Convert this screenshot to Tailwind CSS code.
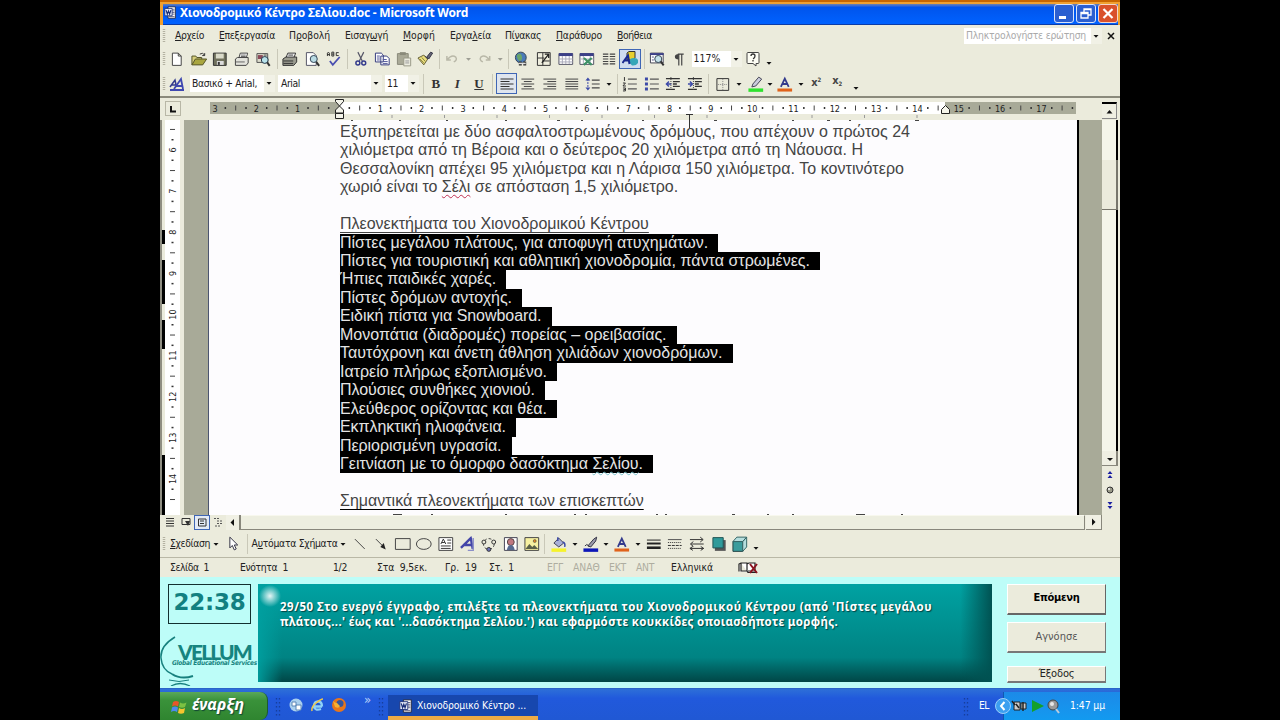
<!DOCTYPE html>
<html lang="el">
<head>
    <meta charset="UTF-8">
    <meta name="viewport" content="width=device-width, initial-scale=1.0">
    <title>Χιονοδρομικό Κέντρο Σελίου.doc - Microsoft Word</title>
    <script src="https://cdn.jsdelivr.net/npm/@tailwindcss/browser@4"></script>
</head>
<body class="bg-black overflow-hidden">
    <!-- Shared glyphs -->
    <svg class="hidden">
        <symbol id="down" viewBox="0 0 10 16"><path d="M2.5 7h5L5 9.8z" fill="#111"/></symbol>
        <symbol id="low" viewBox="0 0 10 16"><path d="M2.5 11h5L5 13.8z" fill="#111"/></symbol>
        <symbol id="grip" viewBox="0 0 4 16"><path d="M2 1v14" stroke="#b4b2a2" stroke-width="2.5" stroke-dasharray="1 1"/></symbol>
        <symbol id="word" viewBox="0 0 16 16"><path d="M5 1h9v14H5z" fill="#fff" stroke="#223"/><path d="M8 4h5M8 6h5M10 8h3M10 10h3M6 13h7" stroke="#557"/><path d="M1 3h9v9H1z" fill="#e8ecf8" stroke="#1b2f78"/><path d="M2.5 5l1.6 5L5.5 6l1.4 4 1.6-5" fill="none" stroke="#1b2f78" stroke-width="1.4"/></symbol>
        <symbol id="fontA" viewBox="0 0 16 16"><path d="M4 11L8 2.500l4 8.500M5.500 8h5" fill="none" stroke="#333a8c" stroke-width="1.800"/><path d="M0.500 12.500h15v3.500h-15z" fill="#e0621a"/></symbol>
        <symbol id="wordart" viewBox="0 0 16 16"><path d="M1 12L11 2l2 11M4.500 9h8" fill="none" stroke="#4446a8" stroke-width="2.400"/><path d="M13.500 2v12.500H8" fill="none" stroke="#8b8fc8" stroke-width="1.500"/></symbol>
    </svg>

    <div class="w-[960px] h-[720px] mx-auto bg-[#ebebdc] flex flex-col overflow-hidden font-['DejaVu_Sans_Condensed','DejaVu_Sans',sans-serif] text-[10.300px] text-[#222] whitespace-nowrap">

        <!-- Title bar -->
        <div class="h-[25px] shrink-0 border-t-2 border-[#c96600] bg-[#f0a030] pt-[2px] pr-[2px] pl-[3px]">
            <div class="h-[21px] flex items-center bg-linear-to-b from-[#6a7fae] via-[#0054ec] via-15% to-[#0062ff] border-b border-[#0b3ca8] pl-[1px]">
                <svg class="size-[13px] -mt-1"><use href="#word"/></svg>
                <span class="fit ml-[3px] -mt-[2px] text-white font-bold text-[12px] font-['Noto_Sans',sans-serif]" data-w="288">Χιονοδρομικό Κέντρο Σελίου.doc - Microsoft Word</span>
                <div class="ml-auto flex gap-[2px] -mt-[1px]">
                    <svg class="w-5 h-[19px]" viewBox="0 0 20 19"><rect x=".5" y=".5" width="19" height="18" rx="2.500" fill="#2b5fd0" stroke="#d9e4fa"/><path d="M5 13.500h7" stroke="#fff" stroke-width="3"/></svg>
                    <svg class="w-5 h-[19px]" viewBox="0 0 20 19"><rect x=".5" y=".5" width="19" height="18" rx="2.500" fill="#2b5fd0" stroke="#d9e4fa"/><path d="M8 8V5h7v6h-3M5 8.500h7V14H5zM5 9.500h7M8 5.500h7" stroke="#fff" fill="none" stroke-width="1.300"/></svg>
                    <svg class="w-5 h-[19px]" viewBox="0 0 20 19"><rect x=".5" y=".5" width="19" height="18" rx="2.500" fill="#d9512c" stroke="#f4d6c8"/><path d="M5.500 5l9 9M14.500 5l-9 9" stroke="#fff" stroke-width="2.200"/></svg>
                </div>
            </div>
        </div>

        <!-- Menu bar -->
        <div class="h-[22px] shrink-0 flex items-center pl-[2px]">
            <svg class="w-1 h-4 mr-[9px]"><use href="#grip"/></svg>
            <div class="w-[44px]"><span class="fit" data-w="29"><u>Α</u>ρχείο</span></div>
            <div class="w-[70px]"><span class="fit" data-w="56"><u>Ε</u>πεξεργασία</span></div>
            <div class="w-[56px]"><span class="fit" data-w="41">Π<u>ρ</u>οβολή</span></div>
            <div class="w-[58px]"><span class="fit" data-w="43">Εισαγ<u>ω</u>γή</span></div>
            <div class="w-[47px]"><span class="fit" data-w="32"><u>Μ</u>ορφή</span></div>
            <div class="w-[55px]"><span class="fit" data-w="41">Εργα<u>λ</u>εία</span></div>
            <div class="w-[51px]"><span class="fit" data-w="36">Πί<u>ν</u>ακας</span></div>
            <div class="w-[61px]"><span class="fit" data-w="46"><u>Π</u>αράθυρο</span></div>
            <div><span class="fit" data-w="35"><u>Β</u>οήθεια</span></div>
            <div class="ml-auto w-[138px] h-4 bg-white text-[#aaa] flex items-center pl-[2px]">
                <span class="fit" data-w="120">Πληκτρολογήστε ερώτηση</span>
                <div class="ml-auto w-[11px] h-4 bg-[#f1f1e6]"><svg class="w-[10px] h-4"><use href="#down"/></svg></div>
            </div>
            <svg class="size-2 ml-[5px] mr-[5px]" viewBox="0 0 8 8"><path d="M1 1l6 6M7 1L1 7" stroke="#111" stroke-width="1.500"/></svg>
        </div>

        <!-- Standard toolbar -->
        <div class="h-6 shrink-0 flex items-center pl-[2px]">
            <svg class="w-1 h-4"><use href="#grip"/></svg>
            <div class="flex items-center *:w-[21.600px] *:h-4">
                <svg viewBox="-3 0 22 16"><path d="M3.500 2h6l3 3v9.500h-9zM9.500 2v3h3" fill="#fff" stroke="#444"/></svg>
                <svg viewBox="-3 0 22 16"><path d="M1 14V5h4l1 1.500h5V8" fill="#d6cf7c" stroke="#55542a"/><path d="M1 14l3.500-6H16l-4 6z" fill="#a9a63f" stroke="#55542a"/><path d="M9 3q3-2 5 1M14 2v2.500h-2.500" fill="none" stroke="#333"/></svg>
                <svg viewBox="-3 0 22 16"><path d="M1.500 2h13v12.500h-13z" fill="#6f705c" stroke="#333"/><path d="M4 2.500h8v5H4z" fill="#d9dac9"/><path d="M5 10h7v4H5z" fill="#ddd"/><path d="M6 11h2v3H6z" fill="#333"/></svg>
                <svg viewBox="-3 0 22 16"><path d="M5 7l1.500-5H14l-1.500 5" fill="#fff" stroke="#444"/><path d="M1.500 8l2-1.500h11V12l-2 2.500h-11z" fill="#e3e3dc" stroke="#444"/><path d="M2 11h9M7 4h5M7 5.500h5" stroke="#666"/></svg>
                <svg viewBox="-3 0 22 16"><path d="M2 2.500h11v9H2z" fill="#dcdccc" stroke="#555"/><path d="M3 4h5v4H3z" fill="#8b4a5a"/><path d="M9 4h3" stroke="#555"/><circle cx="10" cy="9" r="3.500" fill="#b8e2ea" stroke="#234"/><path d="M12.500 11.500L15 15" stroke="#333" stroke-width="2"/></svg>
            </div>
            <div class="w-[5.400px] h-5 border-l border-[#c9c8b8] translate-x-[3px]"></div>
            <div class="flex items-center *:w-[21.600px] *:h-4">
                <svg viewBox="-3 0 22 16"><path d="M4 7l2-5h8l-2 5" fill="#fff" stroke="#333"/><path d="M1 8l3-2h11v5l-3 3.500H1z" fill="#9b9c90" stroke="#333"/><path d="M1.500 10h10M1.500 12.500h10M6.500 4h5" stroke="#333"/></svg>
                <svg viewBox="-3 0 22 16"><path d="M2.500 1.500h7l3 3v10h-10z" fill="#fff" stroke="#556"/><circle cx="10" cy="8" r="3.600" fill="#b9dbe4" stroke="#345"/><path d="M12.500 11L15.500 15" stroke="#333" stroke-width="2"/></svg>
                <svg viewBox="-3 0 22 16"><path d="M1.500 5V2l1-1 1 1v3M1.500 3.500h2M6 5V1h2v4zM6 3h2M13 1.500h-2.500v3H13" fill="none" stroke="#222" stroke-width=".9"/><path d="M4 10l3 4 7-8" fill="none" stroke="#4a4fb0" stroke-width="1.800"/></svg>
            </div>
            <div class="w-[5.400px] h-5 border-l border-[#c9c8b8] translate-x-[3px]"></div>
            <div class="flex items-center *:w-[21.600px] *:h-4">
                <svg viewBox="-3 0 22 16"><path d="M5 1l4.500 9M11 1l-4.500 9" stroke="#556" stroke-width="1.200"/><circle cx="5" cy="12" r="2" fill="none" stroke="#333a8c" stroke-width="1.500"/><circle cx="11" cy="12" r="2" fill="none" stroke="#333a8c" stroke-width="1.500"/></svg>
                <svg viewBox="-3 0 22 16"><path d="M1.500 2h6l2 2v7h-8zM7 5h6l2.500 2.500V14H7z" fill="#fff" stroke="#333a7c"/><path d="M3 5h3M3 7h3M3 9h3M9 8.500h4M9 10.500h5M9 12.500h5" stroke="#555a9c"/></svg>
                <svg viewBox="-3 0 22 16"><path d="M1.500 2.500h11v11h-11z" fill="#a9a997" stroke="#8a8a7a"/><path d="M4 1h6v3H4z" fill="#8a8a7a"/><path d="M8 7h7v8H8z" fill="#ecece0" stroke="#999988"/><path d="M9.500 10h4M9.500 12h4" stroke="#999"/></svg>
                <svg viewBox="-3 0 22 16"><path d="M1 7l6-3 4 4-4 6z" fill="#eadf7d" stroke="#66603a"/><path d="M8 5l3 3M10 6l4-5 2 1-4 6z" fill="#667" stroke="#334"/><path d="M3 8l4 4M5 6.500l3.500 4" stroke="#8a8240"/></svg>
            </div>
            <div class="w-[5.400px] h-5 border-l border-[#c9c8b8] translate-x-[3px]"></div>
            <svg class="w-[21.600px] h-4" viewBox="-3 0 22 16"><path d="M3 5v4h4M3.500 8.500Q8 3 12 6q2 3-2 5" fill="none" stroke="#b9b8a8" stroke-width="1.500"/></svg>
            <svg class="w-[11px] h-4 opacity-35"><use href="#down"/></svg>
            <svg class="w-[21.600px] h-4" viewBox="-3 0 22 16"><path d="M13 5v4H9M12.500 8.500Q8 3 4 6q-2 3 2 5" fill="none" stroke="#b9b8a8" stroke-width="1.500"/></svg>
            <svg class="w-[10.500px] h-4 opacity-35"><use href="#down"/></svg>
            <div class="w-[5.400px] h-5 border-l border-[#c9c8b8] translate-x-[2px]"></div>
            <div class="flex items-center *:w-[21.600px] *:h-4">
                <svg viewBox="-3 0 22 16"><circle cx="7" cy="6.500" r="5.500" fill="#4b7ab8" stroke="#345"/><path d="M3 4q4-3 5 1t-2 5q-3-1-3-6z" fill="#6aa56a"/><path d="M5 12.500h3m1.500 0h3" stroke="#333" stroke-width="4"/><path d="M5 12.500h7" stroke="#ddd" stroke-width="1.500"/></svg>
                <svg viewBox="-3 0 22 16"><path d="M1.500 1.500h13v13h-13zM1.500 7h7M7 1.500v13M7 10h7" fill="#efeede" stroke="#333"/><path d="M6 12l7-9M9 3h4v4" fill="none" stroke="#222" stroke-width="1.300"/></svg>
                <svg viewBox="-3 0 22 16"><path d="M1 2.500h14v11H1z" fill="#fff" stroke="#556"/><path d="M1 2h14v3H1z" fill="#3c4088"/><path d="M4.500 5v8M8 5v8M11.500 5v8M1 8h14M1 11h14" stroke="#aab"/></svg>
                <svg viewBox="-3 0 22 16"><path d="M1 2.500h14v11H1z" fill="#fff" stroke="#556"/><path d="M1 2h14v3H1z" fill="#3c4088"/><path d="M4.500 5v8M11.500 5v8M1 8h14" stroke="#aab"/><path d="M5 7l8 7M13 7l-8 7" stroke="#3f9168" stroke-width="2.200"/></svg>
                <svg viewBox="-3 0 22 16"><path d="M2 3h5.500M2 5.500h5.500M2 8h5.500M2 10.500h5.500M2 13h5.500M9 3h5.500M9 5.500h5.500M9 8h5.500M9 10.500h5.500M9 13h5.500" stroke="#444" stroke-width="1.100"/></svg>
                <div class="!h-5 border border-[#3f66b5] bg-[#cfdcf0] flex items-center justify-center"><svg class="size-4" viewBox="0 0 16 16"><path d="M5 2l2-1.500h6V7L11 9H5z" fill="#e7cf2f" stroke="#333"/><path d="M7 11q0-4 5-4t4 5q-2 3-6 2.500z" fill="#36a6b8"/><path d="M.5 12L6 4.500l1.500 8.500M2 9.500h5" fill="none" stroke="#1b2a90" stroke-width="2"/></svg></div>
            </div>
            <div class="w-[5.400px] h-5 border-l border-[#c9c8b8] translate-x-[3px]"></div>
            <div class="flex items-center *:w-[21.600px] *:h-4">
                <svg viewBox="-3 0 22 16"><path d="M1.500 2h13v10h-13z" fill="#fff" stroke="#445"/><path d="M1 2h14v2H1z" fill="#3c4088"/><path d="M3 6h2M3 9h2" stroke="#558"/><circle cx="9.500" cy="8" r="3.600" fill="#c5e2ea" stroke="#345"/><path d="M12 10.500l3 4" stroke="#333" stroke-width="2"/></svg>
                <svg viewBox="-3 0 22 16"><path d="M8 3v11.500M11 3v11.500M7 3h6" stroke="#444" stroke-width="1.200"/><path d="M8 3Q4 3 4 5.800T8 8.500z" fill="#444"/></svg>
            </div>
            <div class="ml-[2px] w-[50px] h-4 bg-white flex items-center pl-[2px]">
                <span class="fit" data-w="27">117%</span>
                <div class="ml-auto w-[11px] h-4 bg-[#f1f1e6]"><svg class="w-[10px] h-4"><use href="#down"/></svg></div>
            </div>
            <svg class="w-[22px] h-4" viewBox="-3 0 22 16"><path d="M3 1.500h10q1 0 1 1v9q0 1-1 1h-2V15l-3-2.500H3q-1 0-1-1v-9q0-1 1-1z" fill="#fdfdf4" stroke="#444"/><path d="M6 5q0-2 2-2t2 2-2 2.800M8 9v1.500" fill="none" stroke="#333" stroke-width="1.300"/></svg>
            <svg class="w-[10px] h-4"><use href="#low"/></svg>
        </div>

        <!-- Formatting toolbar -->
        <div class="h-[25px] shrink-0 flex items-center pl-[2px]">
            <svg class="w-1 h-4"><use href="#grip"/></svg>
            <svg class="w-[22px] h-4" viewBox="-3 0 22 16"><path d="M1 11L6 4l1.500 7M3 9h4" fill="none" stroke="#333a8c" stroke-width="1.500"/><path d="M5 13l7-10 2 10M8 10h6M1 14h14" fill="none" stroke="#3f48b0" stroke-width="1.800"/></svg>
            <div class="ml-[2px] w-[85px] h-[17px] bg-white flex items-center pl-[2px]">
                <span class="fit" data-w="65">Βασικό + Arial,</span>
                <div class="ml-auto w-[11px] h-[17px] bg-[#f1f1e6]"><svg class="w-[10px] h-4"><use href="#down"/></svg></div>
            </div>
            <div class="ml-[3px] w-[104px] h-[17px] bg-white flex items-center pl-[3px]">
                <span class="fit" data-w="19">Arial</span>
                <div class="ml-auto w-[11px] h-[17px] bg-[#f1f1e6]"><svg class="w-[10px] h-4"><use href="#down"/></svg></div>
            </div>
            <div class="ml-[3px] w-[34px] h-[17px] bg-white flex items-center pl-[2px]">
                <span class="fit" data-w="11">11</span>
                <div class="ml-auto w-[11px] h-[17px] bg-[#f1f1e6]"><svg class="w-[10px] h-4"><use href="#down"/></svg></div>
            </div>
            <div class="ml-[4px] w-[2px] h-5 border-l border-[#c9c8b8]"></div>
            <div class="flex text-center font-['Liberation_Serif',serif] font-bold text-[13px] leading-5 text-[#333] *:w-[21.600px]">
                <span>B</span><span class="italic">I</span><span class="underline">U</span>
            </div>
            <div class="ml-[2px] w-[4px] h-5 border-l border-[#c9c8b8]"></div>
            <div class="flex items-center *:w-[21.600px] *:h-4">
                <div class="!h-[21px] border border-[#3f66b5] bg-[#dfe5ee] flex items-center justify-center"><svg class="size-4" viewBox="0 0 16 16"><path d="M1.500 3h13M1.500 5.500h9M1.500 8h13M1.500 10.500h9M1.500 13h13" stroke="#333"/></svg></div>
                <svg viewBox="-3 0 22 16"><path d="M1.500 3h13M4 5.500h8M1.500 8h13M4 10.500h8M1.500 13h13" stroke="#444"/></svg>
                <svg viewBox="-3 0 22 16"><path d="M1.500 3h13M5.500 5.500h9M1.500 8h13M5.500 10.500h9M1.500 13h13" stroke="#444"/></svg>
                <svg viewBox="-3 0 22 16"><path d="M1.500 3h13M1.500 5.500h13M1.500 8h13M1.500 10.500h13M1.500 13h13" stroke="#444"/></svg>
                <svg viewBox="-3 0 22 16"><path d="M7 4h8M7 8h8M7 12h8" stroke="#444" stroke-width="1.200"/><path d="M3 3v10" stroke="#3c4aa8" stroke-dasharray="2 1"/><path d="M.5 4.500L3 1.500l2.500 3zM.5 11.500L3 14.500l2.500-3z" fill="#3c4aa8"/></svg>
            </div>
            <svg class="w-[10px] h-4"><use href="#down"/></svg>
            <div class="ml-[3px] w-[2px] h-5 border-l border-[#c9c8b8]"></div>
            <div class="flex items-center *:w-[21.800px] *:h-4">
                <svg viewBox="-3 0 22 16"><path d="M6 3h9M6 8h9M6 13h9" stroke="#555" stroke-width="1.200"/><path d="M2.500 1v4M1 7h2.500L1 10h3M1 12h2.500v3H1M1.500 13.500h2" fill="none" stroke="#333"/></svg>
                <svg viewBox="-3 0 22 16"><path d="M6 3h9M6 8h9M6 13h9" stroke="#555" stroke-width="1.200"/><path d="M1 1.500h3v3H1zM1 6.500h3v3H1zM1 11.500h3v3H1z" fill="#3c4aa8"/></svg>
                <svg viewBox="-3 0 22 16"><path d="M1 2.500h14M8 5.500h7M8 8h4M8 10.500h7M1 13.500h9" stroke="#333" stroke-width="1.300"/><path d="M6.500 8H2M4 5.500L1.500 8 4 10.500" fill="none" stroke="#3c4aa8" stroke-width="1.500"/><path d="M6 1v14" stroke="#444" stroke-dasharray="1 1"/></svg>
                <svg viewBox="-3 0 22 16"><path d="M1 2.500h14M8 5.500h7M8 8h4M8 10.500h7M1 13.500h9" stroke="#333" stroke-width="1.300"/><path d="M1 8h4M3 5.500L5.500 8 3 10.500" fill="none" stroke="#3c4aa8" stroke-width="1.500"/><path d="M6.500 1v14" stroke="#444" stroke-dasharray="1 1"/></svg>
            </div>
            <div class="ml-[2px] w-[4px] h-5 border-l border-[#c9c8b8]"></div>
            <svg class="w-[21.600px] h-4" viewBox="-3 0 22 16"><path d="M2 2.500h12v12H2z" fill="none" stroke="#333"/><path d="M8 3v11M3 8.500h10" stroke="#888" stroke-dasharray="1 1"/></svg>
            <svg class="w-[10px] h-4"><use href="#down"/></svg>
            <svg class="w-[21.600px] h-4 ml-[1px]" viewBox="-3 0 22 16"><path d="M4 11l1-3 6-7 3 2-6 7z" fill="#ccd" stroke="#445"/><path d="M.5 12.500h15V16H.5z" fill="#2fe22f"/></svg>
            <svg class="w-[10px] h-4 -ml-px"><use href="#down"/></svg>
            <svg class="w-[21.600px] h-4 -ml-px" viewBox="-3 0 22 16"><use href="#fontA" width="16" height="16"/></svg>
            <svg class="w-[10px] h-4"><use href="#down"/></svg>
            <span class="w-[21px] text-center text-[11px] font-bold text-[#444]">x<sup class="text-[6px] -top-1">2</sup></span>
            <span class="w-[21px] text-center text-[11px] font-bold text-[#444] -mt-1">x<sub class="text-[6px]">2</sub></span>
            <svg class="w-[10px] h-4 ml-[3px]"><use href="#low"/></svg>
        </div>

        <!-- Horizontal ruler -->
        <div class="h-6 shrink-0 border-t-2 border-[#8b8a7c] flex">
            <div class="w-[5px]"></div>
            <div class="w-4 h-[15px] mt-[3px] border border-[#b8b7a6] flex items-center justify-center"><svg class="size-2" viewBox="0 0 8 8"><path d="M2 1v5.500h5" fill="none" stroke="#111" stroke-width="2"/></svg></div>
            <svg id="hruler" class="w-[900px] h-[22px] ml-[29px] text-[9px] font-['DejaVu_Sans_Condensed',sans-serif]">
                <path d="M0 4h129v12H0zM735 4h131v12H735z" fill="#a8aa98"/>
                <path d="M129 4h606v12H129z" fill="#fff"/>
            </svg>
        </div>

        <!-- Document window -->
        <div class="h-[395px] shrink-0 flex">
            <svg class="w-[5px] h-full" viewBox="0 0 5 395"><path d="M1 0v395" stroke="#8f8e82" stroke-width="2"/><path d="M3.500 110v14M3.500 140v44M3.500 200v29M3.500 335v60" stroke="#000" stroke-width="3"/></svg>
            <svg id="vruler" class="w-[15px] h-full bg-white text-[9px] font-['DejaVu_Sans_Condensed',sans-serif]"></svg>
            <div class="w-1"></div>
            <div class="w-[25px] bg-[#a8aa98] border-r border-[#4c5570]"></div>

            <!-- Page -->
            <div class="w-[870px] h-full relative overflow-hidden bg-[#fdfcfe] border-r-2 border-black pl-[131px] pt-[2.800px] font-['Liberation_Sans',Arial,sans-serif] text-[16px] leading-[18.450px] text-[#444]">
                <p><span class="fit" data-w="570">Εξυπηρετείται με δύο ασφαλτοστρωμένους δρόμους, που απέχουν ο πρώτος 24</span></p>
                <p><span class="fit" data-w="523">χιλιόμετρα από τη Βέροια και ο δεύτερος 20 χιλιόμετρα από τη Νάουσα. Η</span></p>
                <p><span class="fit" data-w="564">Θεσσαλονίκη απέχει 95 χιλιόμετρα και η Λάρισα 150 χιλιόμετρα. Το κοντινότερο</span></p>
                <p><span class="fit" data-w="338">χωριό είναι το <span class="underline decoration-wavy decoration-[#c03050] decoration-[0.700px] underline-offset-2">Σέλι</span> σε απόσταση 1,5 χιλιόμετρο.</span></p>
                <p>&nbsp;</p>
                <p><span class="fit underline decoration-1 underline-offset-[3px]" data-w="309">Πλεονεκτήματα του Χιονοδρομικού Κέντρου</span></p>
                <div class="flex flex-col items-start text-[#e4e4e4] *:bg-black *:pr-[10px]">
                    <p><span class="fit" data-w="368.500">Πίστες μεγάλου πλάτους, για αποφυγή ατυχημάτων.</span></p>
                    <p><span class="fit" data-w="470">Πίστες για τουριστική και αθλητική χιονοδρομία, πάντα στρωμένες.</span></p>
                    <p><span class="fit" data-w="156">Ήπιες παιδικές χαρές.</span></p>
                    <p><span class="fit" data-w="172">Πίστες δρόμων αντοχής.</span></p>
                    <p><span class="fit" data-w="201.500">Ειδική πίστα για Snowboard.</span></p>
                    <p><span class="fit" data-w="326.500">Μονοπάτια (διαδρομές) πορείας – ορειβασίας.</span></p>
                    <p><span class="fit" data-w="382.500">Ταυτόχρονη και άνετη άθληση χιλιάδων χιονοδρόμων.</span></p>
                    <p><span class="fit" data-w="207">Ιατρείο πλήρως εξοπλισμένο.</span></p>
                    <p><span class="fit" data-w="195">Πλούσιες συνθήκες χιονιού.</span></p>
                    <p><span class="fit" data-w="207">Ελεύθερος ορίζοντας και θέα.</span></p>
                    <p><span class="fit" data-w="166">Εκπληκτική ηλιοφάνεια.</span></p>
                    <p><span class="fit" data-w="161.500">Περιορισμένη υγρασία.</span></p>
                    <p><span class="fit" data-w="303">Γειτνίαση με το όμορφο δασόκτημα <span class="underline decoration-wavy decoration-[#7cc4cc] decoration-[0.700px] underline-offset-2">Σελίου</span>.</span></p>
                </div>
                <p>&nbsp;</p>
                <p><span class="fit underline decoration-1 decoration-black underline-offset-[3px]" data-w="304">Σημαντικά πλεονεκτήματα των επισκεπτών</span></p>
                <!-- Slivers of the lines scrolled out of view -->
                <svg class="absolute left-0 top-0 w-[868px] h-[395px]"><path d="M142 .5h2M190 .5h2M237 .5h2M296 .5h2M348 .5h3M372 .5h2M433 .5h2M505 .5h3M583 .5h2M618 .5h3M640 .5h2M706 .5h4M184 394.500h9M222 394.500h2M296 394.500h2M365 394.500h2M376 394.500h2M447 394.500h2M456 394.500h2M523 394.500h3M558 394.500h2M583 394.500h2M647 394.500h9M692 394.500h2" stroke="#444"/></svg>
                <!-- Text cursor -->
                <svg class="absolute left-[476px] top-0 w-2 h-2"><path d="M4.500 0v8" stroke="#333"/></svg>
            </div>
            <div class="w-[23px] bg-[#a8aa98]"></div>

            <!-- Vertical scrollbar -->
            <div class="relative w-[18px] flex flex-col">
                <div class="absolute -top-[18px] left-0 w-[15px] h-[17px] border-t-2 border-t-black border-r border-r-[#888] border-b border-b-[#888] bg-[#efefe2]"><svg class="w-[14px] h-[14px]" viewBox="0 0 14 14"><path d="M4.500 9.500h6L7.500 6z" fill="#111"/></svg></div>
                <div class="h-[40px] w-4 bg-[#f5f6ea] border-r-2 border-black"></div>
                <div class="h-[50px] w-4 bg-[#ebebdc] border-r-2 border-b border-[#77766c]"></div>
                <div class="h-[241px] w-4 bg-[#f5f6ea] border-r-2 border-black"></div>
                <div class="h-[15px] w-4 bg-[#efefe2] border-r-2 border-b border-[#88877c]"><svg class="w-[14px] h-[14px]" viewBox="0 0 14 14"><path d="M5 7h6L8 10z" fill="#111"/></svg></div>
                <svg class="w-4 h-[49px]" viewBox="0 0 16 49"><path d="M5.500 8L8 5l2.500 3zM5.500 12L8 9l2.500 3zM5.500 36L8 39l2.500-3zM5.500 40L8 43l2.500-3z" fill="#1a1fa0"/><circle cx="8" cy="24" r="3" fill="#999a88" stroke="#333"/><circle cx="7" cy="23" r="1" fill="#fff"/></svg>
            </div>
        </div>

        <!-- View buttons and horizontal scrollbar -->
        <div class="h-4 shrink-0 flex items-start pl-[2px]">
            <svg class="w-4 h-[15px]" viewBox="0 0 16 15"><path d="M4 3.500h8M4 6h8M4 8.500h8M4 11h8" stroke="#333"/></svg>
            <svg class="w-4 h-[15px]" viewBox="0 0 16 15"><path d="M4 3.500h8v6H4z" fill="none" stroke="#333"/><path d="M7 6h5l-2 5z" fill="#333"/></svg>
            <div class="w-4 h-[15px] border border-[#3f66b5] bg-[#e3eaf5]"><svg class="w-[14px] h-[13px]" viewBox="0 0 14 13"><path d="M3.500 3h7.500v7H3.500zM5 5h4M5 7.500h4" fill="none" stroke="#333"/></svg></div>
            <svg class="w-4 h-[15px]" viewBox="0 0 16 15"><path d="M4 3.500h6M7 6h5M7 8.500h5M5 11h6" stroke="#555" stroke-dasharray="2 1"/></svg>
            <div class="w-[15px] h-[15px] border-r-2 border-[#88877c] bg-[#f0f0e4]"><svg class="w-[13px] h-[15px]" viewBox="0 0 13 15"><path d="M8 4v7L4.500 7.500z" fill="#111"/></svg></div>
            <div class="w-[844px] h-[15px] bg-[#edeee0] border-r border-b border-[#88877c] border-t border-t-[#f8f8ee]"></div>
            <div class="ml-[1px] w-4 h-[15px] bg-[#f0f0e4] border-r border-b border-[#88877c]"><svg class="w-[14px] h-[14px]" viewBox="0 0 14 14"><path d="M6 3.500v7l3.500-3.500z" fill="#111"/></svg></div>
        </div>

        <!-- Drawing toolbar -->
        <div class="h-[27px] shrink-0 flex items-center pl-[2px] border-b border-[#b9b8a6]">
            <svg class="w-1 h-4 mr-1"><use href="#grip"/></svg>
            <div class="w-[41px]"><span class="fit" data-w="40"><u>Σ</u>χεδίαση</span></div>
            <svg class="w-[10px] h-4"><use href="#down"/></svg>
            <svg class="w-[21.600px] h-4 ml-[1px]" viewBox="-3 0 22 16"><path d="M5 1v11l2.500-2.500L9.500 14l2-1-2-4H13z" fill="#fff" stroke="#334"/></svg>
            <div class="ml-[3px] w-[5px] h-5 border-l border-[#c9c8b8]"></div>
            <span class="fit" data-w="86">Α<u>υ</u>τόματα Σχήματα</span>
            <svg class="w-[10px] h-4"><use href="#down"/></svg>
            <div class="flex items-center *:w-[21.600px] *:h-4 ml-[1px]">
                <svg viewBox="-3 0 22 16"><path d="M3 3l10 10" stroke="#444"/></svg>
                <svg viewBox="-3 0 22 16"><path d="M3 3l8 8" stroke="#444"/><path d="M13 13.500L7.500 11 11 7z" fill="#222"/></svg>
                <svg viewBox="-3 0 22 16"><path d="M.5 2.500h15v11H.5z" fill="none" stroke="#444"/></svg>
                <svg viewBox="-3 0 22 16"><ellipse cx="8" cy="8" rx="7.500" ry="5.500" fill="none" stroke="#444"/></svg>
                <svg viewBox="-3 0 22 16"><path d="M1 1.500h14v13H1z" fill="#fff" stroke="#444"/><path d="M3 8l2.500-5L8 8M4 6.500h3M9.500 4h4M9.500 7h4M3 10h10M3 12.500h10" fill="none" stroke="#333"/></svg>
                <svg viewBox="-3 0 22 16"><use href="#wordart" width="16" height="16"/></svg>
                <svg viewBox="-3 0 22 16"><circle cx="8" cy="8" r="5.500" fill="none" stroke="#444" stroke-dasharray="3 2"/><circle cx="3" cy="6" r="2" fill="#ebebdc" stroke="#333"/><circle cx="13" cy="6" r="2" fill="#ebebdc" stroke="#333"/><circle cx="8" cy="13.500" r="2" fill="#6a70b8" stroke="#333"/></svg>
                <svg viewBox="-3 0 22 16"><path d="M1.500 1.500h13v13h-13z" fill="#fff" stroke="#445"/><circle cx="8" cy="6" r="3.500" fill="#c07880" stroke="#544"/><path d="M4 14q1-5 4-5t4 5z" fill="#566a90"/></svg>
                <svg viewBox="-3 0 22 16"><path d="M1 1.500h14v13H1z" fill="#f6f0a0" stroke="#444"/><path d="M1.500 13l4-5 3 3 2-2 4 4z" fill="#5a6048"/><circle cx="11" cy="5" r="1.500" fill="#e08820" stroke="#444" stroke-width=".6"/></svg>
            </div>
            <div class="ml-[1px] w-[4px] h-5 border-l border-[#c9c8b8]"></div>
            <svg class="w-[21.600px] h-4" viewBox="-3 0 22 16"><path d="M3 7l5-5 5 5-5 4z" fill="#a9b0d8" stroke="#445"/><path d="M12 6q3 1 2 5M7 5V1" fill="none" stroke="#3c4aa8" stroke-width="1.500"/><path d="M.5 12.500h15V16H.5z" fill="#f6f32a"/></svg>
            <svg class="w-[10px] h-4"><use href="#down"/></svg>
            <svg class="w-[21.600px] h-4" viewBox="-3 0 22 16"><path d="M5 10l6-7 3-2-1 4-5 6z" fill="#99a" stroke="#334"/><path d="M2 10q2-3 4 0" fill="none" stroke="#334"/><path d="M.5 12.500h15V16H.5z" fill="#0c16b8"/></svg>
            <svg class="w-[10px] h-4"><use href="#down"/></svg>
            <svg class="w-[21.600px] h-4" viewBox="-3 0 22 16"><use href="#fontA" width="16" height="16"/></svg>
            <svg class="w-[10px] h-4"><use href="#down"/></svg>
            <div class="flex items-center *:w-[21.600px] *:h-4">
                <svg viewBox="-3 0 22 16"><path d="M1 4h14" stroke="#222"/><path d="M1 7.500h14" stroke="#222" stroke-width="2"/><path d="M1 11.800h14" stroke="#222" stroke-width="2.600"/></svg>
                <svg viewBox="-3 0 22 16"><path d="M1 3.500h14" stroke="#555"/><path d="M1 6.500h14M1 12.500h14" stroke="#333" stroke-dasharray="1 1"/><path d="M1 9.500h14" stroke="#333" stroke-dasharray="3 1"/></svg>
                <svg viewBox="-3 0 22 16"><path d="M1 3.500h13M2 8h13M1 12.500h14M11.500 1l3 2.500-3 2.500M4.500 5.500L1.500 8l3 2.500M4 10.500l-3 2 3 2M12 10.500l3 2-3 2" fill="none" stroke="#333"/></svg>
                <svg viewBox="-3 0 22 16"><path d="M4 4h11v11H4z" fill="#555"/><path d="M2 1.500h10.500v10.500H2z" fill="#2f9a9a" stroke="#255"/></svg>
                <svg viewBox="-3 0 22 16"><path d="M1 5.500h10v10H1z" fill="#3a9c9c" stroke="#244"/><path d="M1 5.500L5 1h10l-4 4.500zM11 15.500V5.500L15 1v10z" fill="#b5dede" stroke="#366"/></svg>
            </div>
            <svg class="w-[10px] h-4"><use href="#low"/></svg>
        </div>

        <!-- Status bar -->
        <div class="h-[19px] shrink-0 flex items-center pl-[10px] pt-px">
            <div class="w-[70px]"><span class="fit" data-w="39">Σελίδα&nbsp; 1</span></div>
            <div class="w-[93px]"><span class="fit" data-w="48">Ενότητα&nbsp; 1</span></div>
            <div class="w-[44px]"><span class="fit" data-w="14">1/2</span></div>
            <div class="w-[68px]"><span class="fit" data-w="50">Στα&nbsp; 9,5εκ.</span></div>
            <div class="w-[44px]"><span class="fit" data-w="32">Γρ.&nbsp; 19</span></div>
            <div class="w-[58px]"><span class="fit" data-w="25">Στ.&nbsp; 1</span></div>
            <div class="flex text-[#aeada0]">
                <div class="w-[26px]"><span class="fit" data-w="16">ΕΓΓ</span></div>
                <div class="w-[36px]"><span class="fit" data-w="27">ΑΝΑΘ</span></div>
                <div class="w-[27px]"><span class="fit" data-w="17">ΕΚΤ</span></div>
                <div class="w-[35px]"><span class="fit" data-w="18">ΑΝΤ</span></div>
            </div>
            <div class="w-[67px]"><span class="fit" data-w="42">Ελληνικά</span></div>
            <svg class="w-5 h-3" viewBox="0 0 20 12"><path d="M1 9.500V2l2-1h6v8l1 1.500h8V9M3 1v8h6M9 9V2l2-1h6v8h-7" fill="#fff" stroke="#222" stroke-width="1.200"/><path d="M12 2l7 9M19 2l-7 9" stroke="#8c1420" stroke-width="2"/></svg>
        </div>

        <!-- Exam panel -->
        <div class="h-[111px] shrink-0 bg-[#bdfdf8] flex pt-[7px] pl-[8px]">
            <div class="w-[90px]">
                <div class="w-[83px] h-10 border border-[#12302f] flex justify-center pt-[1px]">
                    <span class="fit text-[23px] leading-8 font-bold text-[#128080] font-['DejaVu_Sans',sans-serif]" data-w="72">22:38</span>
                </div>
                <div class="relative h-[60px]">
                    <svg class="absolute -left-2 top-[10px] w-[40px] h-[52px]" viewBox="0 0 40 52" fill="none" stroke="#17807e"><path d="M15 3Q0 12 1 24t11 16" stroke-width="1.500"/><path d="M12 40q9 6 21 2" stroke-width="2"/><path d="M9 46q10 3 20 0"/><path d="M11 52q9-5 19 0" stroke-width="1.300"/></svg>
                    <span class="fit absolute left-[10px] top-[16px] text-[21px] leading-6 font-black text-[#16847f] font-['Lato',sans-serif]" data-w="73">VELLUM</span>
                    <span class="fit absolute left-[4px] top-[35px] text-[6.500px] leading-2 font-bold italic text-[#16847f]" data-w="85">Global Educational Services</span>
                </div>
            </div>
            <div class="relative w-[734px] h-[98px] overflow-hidden bg-linear-to-b from-[#00a2a2] via-[#008383] via-75% to-[#004646] text-white font-bold text-[11.500px] leading-[15px] font-['Noto_Sans',sans-serif] pl-[22px] pt-[15px] [text-shadow:1px_1px_1px_#044]">
                <div class="absolute inset-y-0 left-0 w-6 bg-linear-to-r from-[#00a0a0]/90 to-transparent"></div>
                <div class="absolute inset-y-0 right-0 w-8 bg-linear-to-l from-[#005252] to-transparent"></div>
                <div class="absolute left-0 top-0 size-6 bg-radial from-white/90 to-transparent to-65%"></div>
                <p class="relative"><span class="fit" data-w="652">29/50 Στο ενεργό έγγραφο, επιλέξτε τα πλεονεκτήματα του Χιονοδρομικού Κέντρου (από 'Πίστες μεγάλου</span></p>
                <p class="relative"><span class="fit" data-w="558">πλάτους...' έως και '...δασόκτημα Σελίου.') και εφαρμόστε κουκκίδες οποιασδήποτε μορφής.</span></p>
            </div>
            <div class="ml-[15px] w-[99px] flex flex-col text-[11px]">
                <button class="h-[31px] pb-px bg-[#ebebdc] border border-t-white border-l-white border-r-[#666] border-b-[#666] border-b-2 font-bold text-black"><span class="fit" data-w="46">Επόμενη</span></button>
                <button class="mt-[7px] h-[31px] bg-[#ebebdc] border border-t-white border-l-white border-r-[#777] border-b-[#777] border-b-2 text-[#555]"><span class="fit" data-w="42">Αγνόησε</span></button>
                <button class="mt-[13px] h-[17px] leading-3 bg-[#ebebdc] border border-t-white border-l-white border-r-[#777] border-b-[#777] border-b-2 text-[#222]"><span class="fit" data-w="36">Έξοδος</span></button>
            </div>
        </div>

        <!-- Taskbar -->
        <div class="h-8 shrink-0 flex bg-linear-to-b from-[#2e6fd8] via-[#2159dc] via-30% to-[#2058d4] border-t border-[#2a65c8] pt-[3px] text-white">
            <div class="w-[108px] h-7 rounded-r-lg bg-linear-to-b from-[#5aa85a] via-[#3a923a] via-30% to-[#2f8530] border-r border-[#1d5a30] flex items-center pl-[11px]">
                <svg class="size-[17px]" viewBox="0 0 17 17"><path d="M2 4q3-2 6 0L7 8.500q-3-2-6 0z" fill="#e8562a"/><path d="M9 4.500q3 2 6.500 0L14 9q-3 1.500-6 0z" fill="#7cc142"/><path d="M1 9.500q3-2 6 0L6 14q-3-2-6 0z" fill="#4d8af0"/><path d="M8 10q3 2 6 0L13 15q-3 1.500-6 0z" fill="#f6c52e"/></svg>
                <span class="fit ml-1 -mt-1 text-[16px] leading-6 font-bold italic font-['Noto_Sans',sans-serif] [text-shadow:1px_1px_1px_#143]" data-w="52">έναρξη</span>
            </div>
            <svg class="ml-[7px] w-[6px] h-7" viewBox="0 0 6 28"><path d="M1.500 6v20M4.500 6v20" stroke="#163f9c" stroke-width="1.300" stroke-dasharray="1.500 2.500"/></svg>
            <svg class="ml-[6px] mt-[5px] w-[66px] h-4" viewBox="0 0 66 16"><circle cx="9" cy="8" r="6.500" fill="#a9cfee"/><path d="M5 5h4v4H5zM9 8h5v5H9z" fill="#fff" stroke="#5a86b8"/>
                <path d="M35 9.500h-8q0-5 4-5t4 5M27 10q1 4 7 2" fill="none" stroke="#8ed2f8" stroke-width="2.300"/><path d="M25 14q-1-4 4-8t7-4" fill="none" stroke="#f1c84a" stroke-width="1.500"/>
                <circle cx="52" cy="8" r="7" fill="#e8761c"/><circle cx="53" cy="6.500" r="3.500" fill="#36569c"/><path d="M46 4q2 2 4 2l3 3q-1 3-5 1z" fill="#f6b133"/></svg>
            <span class="ml-[11px] w-2 text-[13px] leading-4 text-[#b9d2f8]">»</span>
            <svg class="ml-[6px] w-[6px] h-7" viewBox="0 0 6 28"><path d="M1.500 6v20M4.500 6v20" stroke="#163f9c" stroke-width="1.300" stroke-dasharray="1.500 2.500"/></svg>
            <div class="ml-[4px] mt-[3px] w-[150px] h-[25px] shrink-0 bg-[#1747ae] border-b-4 border-[#edab45] flex items-center pl-[11px]">
                <svg class="size-[14px]"><use href="#word"/></svg>
                <span class="fit ml-[4px]" data-w="109">Χιονοδρομικό Κέντρο ...</span>
            </div>
            <div class="ml-auto flex">
                <svg class="w-[6px] h-7" viewBox="0 0 6 28"><path d="M1.500 6v20M4.500 6v20" stroke="#163f9c" stroke-width="1.300" stroke-dasharray="1.500 2.500"/></svg>
                <div class="w-[34px] h-7 pl-[10px] pt-[6px]"><span class="fit" data-w="10">EL</span></div>
                <div class="w-[117px] h-7 bg-linear-to-b from-[#1c8ae8] to-[#129af0] border-l border-[#1058b0] flex items-center">
                    <svg class="-ml-[9px] w-[66px] h-4" viewBox="0 0 66 16"><circle cx="8" cy="8" r="7.500" fill="#3c9ff0" stroke="#9cd0fa"/><path d="M9.500 4L6 8l3.500 4" fill="none" stroke="#fff" stroke-width="2"/>
                        <path d="M19 4h6v8h-6zM26 5h5v6h-5z" fill="#ccc" stroke="#222"/><path d="M17 3l3 4M28 4v9M21 6l3 4" stroke="#222" stroke-width="1.500"/>
                        <path d="M37 2l12 6-12 6z" fill="#14a02a"/><circle cx="58" cy="7" r="5" fill="#9a9a9a" stroke="#444"/><circle cx="57" cy="6" r="2" fill="#e8e8e8"/><path d="M61 11l3 4" stroke="#bcd" stroke-width="2"/></svg>
                    <span class="fit ml-[9px]" data-w="35">1:47 μμ</span>
                </div>
            </div>
        </div>
    </div>

    <script>
        function fit(el) {
            const diff = el.dataset.w - el.getBoundingClientRect().width;
            if (Math.abs(diff) < 0.3) return;
            const spacing = parseFloat(el.style.letterSpacing) || 0;
            el.style.letterSpacing = spacing + diff / el.textContent.length + 'px';
        }
        const observer = new ResizeObserver(entries => entries.forEach(e => fit(e.target)));
        document.querySelectorAll('.fit').forEach(el => {
            el.style.display = 'inline-block';
            el.style.flexShrink = 0;
            observer.observe(el);
        });
        window.addEventListener('load', () => document.querySelectorAll('.fit').forEach(fit));

        const NS = 'http://www.w3.org/2000/svg';
        function add(svg, name, attrs, text) {
            const el = document.createElementNS(NS, name);
            for (const k in attrs) el.setAttribute(k, attrs[k]);
            if (text !== undefined) el.textContent = text;
            svg.appendChild(el);
        }

        // Horizontal ruler, 41.3px per cm, zero at the left indent
        const h = document.getElementById('hruler');
        for (let q = -12; q <= 71; q++) {
            const x = 129 + q * 10.33;
            if (q === 0 || q === 59) continue;
            if (q % 4 === 0) add(h, 'text', {x: x, y: 13.5, 'text-anchor': 'middle', fill: '#222'}, Math.abs(q / 4));
            else if (q % 2 === 0) add(h, 'path', {d: `M${x} 7.500v5`, stroke: '#444'});
            else add(h, 'path', {d: `M${x} 9v2`, stroke: '#333', 'stroke-width': 1.5});
        }
        for (let x = 182; x < 735; x += 52.5) add(h, 'path', {d: `M${x} 17v3`, stroke: '#999'});
        add(h, 'path', {d: 'M125.5 1.500h8v2l-4 4.500 4 4v3h-8v-3l4-4-4-4.500zM125.500 15.500h8v5h-8z', fill: '#f4f4ea', stroke: '#222'});
        add(h, 'path', {d: 'M731.5 15.500v-4l4-4 4 4v4z', fill: '#f4f4ea', stroke: '#222'});
        add(h, 'path', {d: 'M476 16.500h7M479.500 16.500v6', stroke: '#333'});

        // Vertical ruler
        const v = document.getElementById('vruler');
        for (let q = 22; q <= 58; q++) {
            const y = 30 + (q - 24) * 10.28;
            if (q % 4 === 0) add(v, 'text', {transform: `translate(11 ${y}) rotate(-90)`, 'text-anchor': 'middle', fill: '#222'}, q / 4);
            else if (q % 2 === 0) add(v, 'path', {d: `M5 ${y}h5`, stroke: '#444'});
            else add(v, 'path', {d: `M6.500 ${y}h2`, stroke: '#333', 'stroke-width': 1.5});
        }
    </script>
</body>
</html>
